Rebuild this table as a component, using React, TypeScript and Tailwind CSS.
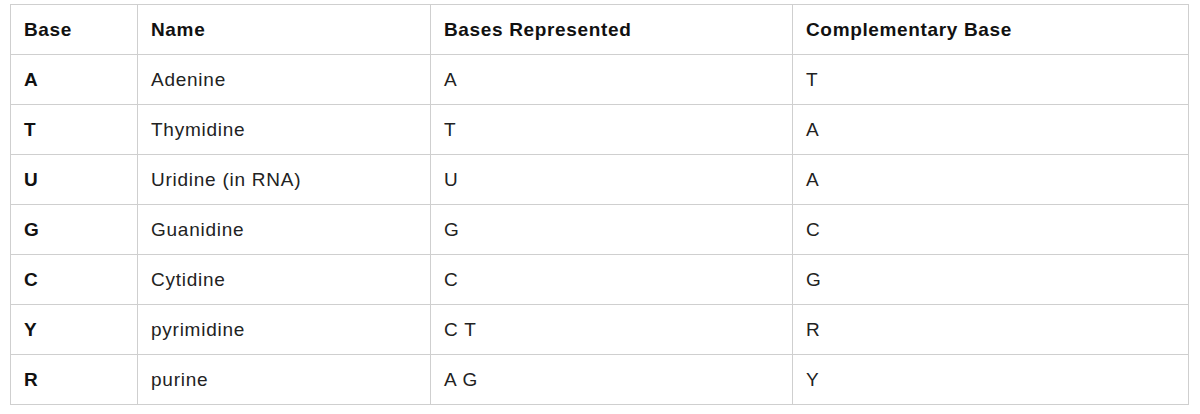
import React from "react"

interface Row {
  base: string
  name: string
  represented: string
  complement: string
}

const rows: Row[] = [
  { base: "A", name: "Adenine", represented: "A", complement: "T" },
  { base: "T", name: "Thymidine", represented: "T", complement: "A" },
  { base: "U", name: "Uridine (in RNA)", represented: "U", complement: "A" },
  { base: "G", name: "Guanidine", represented: "G", complement: "C" },
  { base: "C", name: "Cytidine", represented: "C", complement: "G" },
  { base: "Y", name: "pyrimidine", represented: "C T", complement: "R" },
  { base: "R", name: "purine", represented: "A G", complement: "Y" },
]

const cell = "h-[50px] border border-[#cfcfcf] pl-[13px] pr-[13px] pt-[2px] pb-0 align-middle"

export default function App() {
  return (
    <div className="min-h-[414px] bg-white pl-[10px] pt-[4px] font-['Liberation_Sans',Arial,sans-serif] text-[19px] tracking-[0.75px] text-[#222]">
      <table className="w-[1178px] table-fixed border-collapse text-left">
        <colgroup>
          <col className="w-[127px]" />
          <col className="w-[293px]" />
          <col className="w-[362px]" />
          <col className="w-[396px]" />
        </colgroup>
        <thead>
          <tr className="font-bold text-[#111]">
            <th className={`${cell} tracking-[0.65px]`}>Base</th>
            <th className={`${cell} tracking-[0.65px]`}>Name</th>
            <th className={`${cell} tracking-[0.65px]`}>Bases Represented</th>
            <th className={`${cell} tracking-[0.65px]`}>Complementary Base</th>
          </tr>
        </thead>
        <tbody>
          {rows.map((r) => (
            <tr key={r.base}>
              <td className={`${cell} font-bold text-[#111]`}>{r.base}</td>
              <td className={cell}>{r.name}</td>
              <td className={cell}>{r.represented}</td>
              <td className={cell}>{r.complement}</td>
            </tr>
          ))}
        </tbody>
      </table>
    </div>
  )
}
